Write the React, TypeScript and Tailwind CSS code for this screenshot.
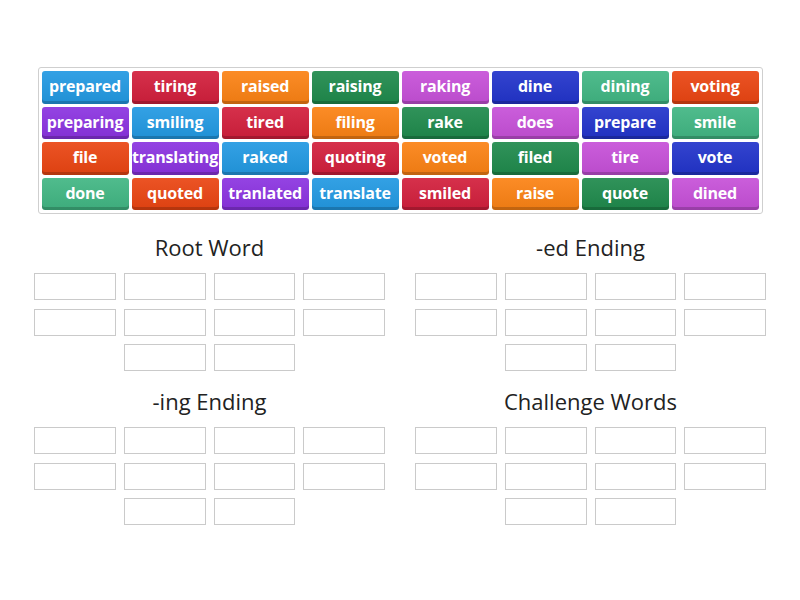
import React from "react";

const tileColors: Record<string, string> = {
  blue: "bg-[#2299e2]",
  red: "bg-[#d21f3c]",
  orange: "bg-[#fb8214]",
  green: "bg-[#1f8a4c]",
  magenta: "bg-[#c650d8]",
  navy: "bg-[#2234cb]",
  teal: "bg-[#41b683]",
  redorange: "bg-[#ea4512]",
  purple: "bg-[#8b33e0]",
};

const tiles: [string, string][] = [
  ["prepared", "blue"],
  ["tiring", "red"],
  ["raised", "orange"],
  ["raising", "green"],
  ["raking", "magenta"],
  ["dine", "navy"],
  ["dining", "teal"],
  ["voting", "redorange"],
  ["preparing", "purple"],
  ["smiling", "blue"],
  ["tired", "red"],
  ["filing", "orange"],
  ["rake", "green"],
  ["does", "magenta"],
  ["prepare", "navy"],
  ["smile", "teal"],
  ["file", "redorange"],
  ["translating", "purple"],
  ["raked", "blue"],
  ["quoting", "red"],
  ["voted", "orange"],
  ["filed", "green"],
  ["tire", "magenta"],
  ["vote", "navy"],
  ["done", "teal"],
  ["quoted", "redorange"],
  ["tranlated", "purple"],
  ["translate", "blue"],
  ["smiled", "red"],
  ["raise", "orange"],
  ["quote", "green"],
  ["dined", "magenta"],
];

function Tile({ word, color }: { word: string; color: string }) {
  return (
    <div
      className={`${tileColors[color]} h-[32.5px] rounded-[3px] flex items-center justify-center text-white font-bold text-[16px] leading-none tracking-[-0.2px] bg-[linear-gradient(rgba(255,255,255,0.08),rgba(0,0,0,0.06))] shadow-[inset_0_-3px_0_rgba(0,0,0,0.18)] pb-[2px]`}
    >
      {word}
    </div>
  );
}

function Group({ title }: { title: string }) {
  return (
    <div className="w-[351px]">
      <h2 className="text-[22px] leading-[30px] text-center text-[#222]">{title}</h2>
      <div className="mt-[11px] grid grid-cols-4 gap-x-[8px] gap-y-[8.5px]">
        {Array.from({ length: 8 }).map((_, i) => (
          <div key={i} className="h-[27px] border border-[#cacaca] bg-white" />
        ))}
        <div />
        <div className="h-[27px] border border-[#cacaca] bg-white" />
        <div className="h-[27px] border border-[#cacaca] bg-white" />
      </div>
    </div>
  );
}

export default function App() {
  return (
    <div className="w-[800px] h-[600px] bg-white pt-[67px] font-['Open_Sans',sans-serif]">
      <div className="mx-auto w-[725px] border border-[#cfcfcf] rounded-[3px] p-[3px] grid grid-cols-8 gap-[3px]">
        {tiles.map(([w, c]) => (
          <Tile key={w} word={w} color={c} />
        ))}
      </div>
      <div className="mx-auto w-[732px] mt-[18px] grid grid-cols-2 gap-x-[30px] gap-y-[15px]">
        <Group title="Root Word" />
        <Group title="-ed Ending" />
        <Group title="-ing Ending" />
        <Group title="Challenge Words" />
      </div>
    </div>
  );
}
